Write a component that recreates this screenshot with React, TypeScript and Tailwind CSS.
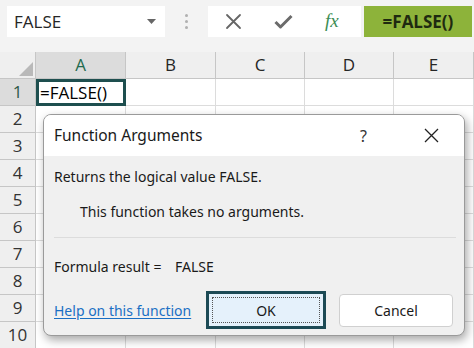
import React from "react";

const COLS = [
  { label: "A", w: 90 },
  { label: "B", w: 90 },
  { label: "C", w: 89 },
  { label: "D", w: 89 },
  { label: "E", w: 80 },
];
const ROWS = [1, 2, 3, 4, 5, 6, 7, 8, 9, 10];

const sheetFont = { fontFamily: '"Open Sans", "Noto Sans", sans-serif' };
const uiFont = { fontFamily: '"Noto Sans", "Open Sans", sans-serif' };

function FormulaBar() {
  return (
    <div className="flex h-[52px] items-start bg-[#f3f3f3] pt-[6px]" style={sheetFont}>
      {/* Name box */}
      <div className="ml-[7px] flex h-[31px] w-[158px] items-center justify-between bg-white pl-[7px] pr-[9px]">
        <span className="text-[17px] text-[#262626]">FALSE</span>
        <svg width="9" height="6" viewBox="0 0 9 6" aria-hidden="true">
          <path d="M0 0h9L4.5 5z" fill="#666" />
        </svg>
      </div>
      <div className="flex h-[31px] w-[43px] flex-col items-center justify-center gap-[3px]">
        <span className="h-[3px] w-[3px] rounded-full bg-[#b0b0b0]" />
        <span className="h-[3px] w-[3px] rounded-full bg-[#b0b0b0]" />
        <span className="h-[3px] w-[3px] rounded-full bg-[#b0b0b0]" />
      </div>
      {/* Cancel / enter / fx */}
      <div className="flex h-[31px] w-[153px] items-center bg-white">
        <svg width="17" height="17" viewBox="0 0 17 17" className="ml-[17px]" aria-hidden="true">
          <path d="M2 2l13 13M15 2L2 15" stroke="#666" strokeWidth="1.8" strokeLinecap="round" />
        </svg>
        <svg width="19" height="15" viewBox="0 0 19 15" className="ml-[32px]" aria-hidden="true">
          <path d="M1.5 8l5 5L17.5 2" stroke="#6b6b6b" strokeWidth="3" fill="none" strokeLinejoin="round" />
        </svg>
        <span
          className="ml-[32px] text-[19px] italic text-[#3c8d55]"
          style={{ fontFamily: '"Liberation Serif", "DejaVu Serif", serif' }}
        >
          fx
        </span>
      </div>
      <div className="ml-[3px] flex h-[31px] w-[108px] items-center justify-center bg-[#8db33a]">
        <span className="text-[17px] font-bold text-[#1f2a10]">=FALSE()</span>
      </div>
    </div>
  );
}

function Sheet() {
  return (
    <div className="flex flex-col" style={sheetFont}>
      {/* header row */}
      <div className="flex h-[27px]">
        <div className="relative h-full w-[36px] border-r border-b border-[#c6c6c6] bg-[#efefef]">
          <svg width="14" height="14" viewBox="0 0 14 14" className="absolute right-[2px] bottom-[2px]" aria-hidden="true">
            <path d="M14 0v14H0z" fill="#b9b9b9" />
          </svg>
        </div>
        {COLS.map((c, i) => (
          <div
            key={c.label}
            style={{ width: c.w }}
            className={
              i === 0
                ? "flex h-full items-center justify-center border-r border-b border-[#c6c6c6] bg-[#dcdcdc] text-[17px] text-[#1f6b4e]"
                : "flex h-full items-center justify-center border-r border-b border-[#c6c6c6] bg-[#efefef] text-[17px] text-[#262626]"
            }
          >
            {c.label}
          </div>
        ))}
      </div>
      {ROWS.map((r) => (
        <div key={r} className="flex h-[27px]">
          <div
            className={
              r === 1
                ? "flex h-full w-[36px] items-center justify-center border-r border-b border-[#c6c6c6] bg-[#dcdcdc] text-[17px] text-[#2f5a48]"
                : "flex h-full w-[36px] items-center justify-center border-r border-b border-[#c6c6c6] bg-[#efefef] text-[17px] text-[#333]"
            }
          >
            {r}
          </div>
          {COLS.map((c, i) => (
            <div
              key={c.label}
              style={{ width: c.w }}
              className={
                r === 1 && i === 0
                  ? "flex h-full items-center border-[3px] border-[#1e4f4f] bg-white pl-[1px] text-[17px] text-black"
                  : "h-full border-r border-b border-[#dcdcdc] bg-white"
              }
            >
              {r === 1 && i === 0 ? "=FALSE()" : null}
            </div>
          ))}
        </div>
      ))}
    </div>
  );
}

function Dialog() {
  return (
    <div
      className="absolute left-[43px] top-[114px] flex h-[222px] w-[422px] flex-col overflow-hidden rounded-[8px] border border-[#9a9a9a] bg-[#f0f0f0] shadow-[2px_4px_10px_rgba(0,0,0,0.35)]"
      style={uiFont}
    >
      <div className="flex h-[41px] shrink-0 items-center bg-white pl-[10px] text-[#1a1a1a]">
        <span className="text-[15.5px]">Function Arguments</span>
        <span className="ml-auto text-[16px] text-[#333]">?</span>
        <svg width="15" height="15" viewBox="0 0 15 15" className="ml-[57px] mr-[25px]" aria-hidden="true">
          <path d="M1 1l13 13M14 1L1 14" stroke="#222" strokeWidth="1.3" />
        </svg>
      </div>
      <div className="flex flex-1 flex-col px-[10px] text-[14px] text-[#1a1a1a]">
        <p className="mt-[11px] leading-[20px]">Returns the logical value FALSE.</p>
        <p className="mt-[15px] pl-[26px] leading-[20px]">This function takes no arguments.</p>
        <div className="mt-[15px] mr-[-2px] h-px bg-[#dcdcdc]" />
        <div className="mt-[19px] flex leading-[20px]">
          <span className="w-[121px]">Formula result =</span>
          <span>FALSE</span>
        </div>
        <div className="mt-[14px] flex items-center">
          <a href="#" className="shrink-0 whitespace-nowrap text-[14px] text-[#1a6fc4] underline underline-offset-2">
            Help on this function
          </a>
          <button className="ml-auto flex h-[38px] w-[120px] items-center justify-center border-[3px] border-[#1c4a55] bg-[#e5f1fb] p-[3px] text-[#1a1a1a]">
            <span className="flex h-full w-full items-center justify-center border border-dotted border-[#555]">
              OK
            </span>
          </button>
          <button className="mr-[1px] ml-[13px] flex h-[33px] w-[114px] items-center justify-center rounded-[4px] border border-[#d0d0d0] bg-white text-[#1a1a1a]">
            Cancel
          </button>
        </div>
      </div>
    </div>
  );
}

export default function App() {
  return (
    <div className="relative h-[348px] w-[474px] overflow-hidden bg-white">
      <FormulaBar />
      <Sheet />
      <Dialog />
    </div>
  );
}
